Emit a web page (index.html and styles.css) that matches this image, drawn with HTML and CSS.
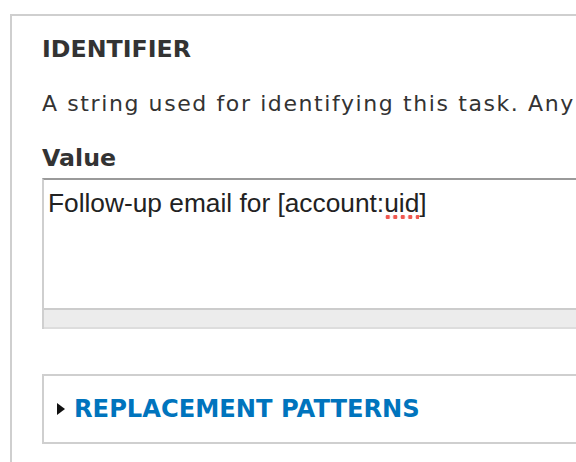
FILE: index.html
```html
<!DOCTYPE html>
<html>
<head>
<meta charset="utf-8">
<link rel="stylesheet" href="styles.css">
</head>
<body>
<div class="page">
  <div class="panel">
    <h3 class="title">IDENTIFIER</h3>
    <p class="desc">A string used for identifying this task. Any</p>
    <label class="label">Value</label>
    <div class="textarea">
      <div class="textarea-body">Follow-up email for [account:<span class="misspelled">uid</span>]</div>
      <div class="grippie"></div>
    </div>
    <div class="fieldset">
      <span class="arrow"></span>
      <a class="legend" href="#">REPLACEMENT PATTERNS</a>
    </div>
  </div>
</div>
</body>
</html>
```
FILE: styles.css
```css
html, body {
  margin: 0;
  padding: 0;
  background: #fff;
  overflow: hidden;
}
.page {
  width: 576px;
  height: 462px;
  overflow: hidden;
  padding-top: 14px;
  padding-left: 10px;
  box-sizing: border-box;
  font-family: "DejaVu Sans", sans-serif;
  color: #333;
}
.panel {
  width: 700px;
  border-top: 2px solid #cfcfcf;
  border-left: 2px solid #cfcfcf;
  padding: 19px 0 0 30px;
  height: 600px;
}
.title {
  margin: 0;
  font-size: 23.7px;
  line-height: 28px;
  font-weight: bold;
  color: #333;
}
.desc {
  margin: 28px 0 0;
  font-size: 22px;
  line-height: 26px;
  letter-spacing: 1.6px;
  color: #333;
  white-space: nowrap;
}
.label {
  display: block;
  margin-top: 27px;
  font-size: 23.7px;
  line-height: 28px;
  font-weight: bold;
  color: #333;
}
.textarea {
  margin-top: 6px;
  border-top: 2px solid #9a9a9a;
  border-left: 2px solid #cfcfcf;
  width: 640px;
}
.textarea-body {
  height: 128px;
  padding: 8px 4px 0;
  box-sizing: border-box;
  font-family: "Liberation Sans", Arial, sans-serif;
  font-size: 26.3px;
  line-height: 30px;
  color: #222;
}
.misspelled {
  background-image: radial-gradient(circle, #f0574f 2px, transparent 2.5px);
  background-size: 7.5px 6px;
  background-repeat: repeat-x;
  background-position: 0 100%;
  padding-bottom: 2px;
}
.grippie {
  height: 17px;
  background: #ececec;
  border-top: 2px solid #cccccc;
  border-bottom: 2px solid #dddddd;
}
.fieldset {
  margin-top: 45px;
  border: 2px solid #cfcfcf;
  width: 640px;
  height: 70px;
  box-sizing: border-box;
  display: flex;
  align-items: center;
  padding-left: 13px;
  gap: 9px;
}
.arrow {
  width: 0;
  height: 0;
  border-top: 6.5px solid transparent;
  border-bottom: 6.5px solid transparent;
  border-left: 8px solid #111;
}
.legend {
  font-size: 24.2px;
  font-weight: bold;
  color: #0074bd;
  text-decoration: none;
}
```
